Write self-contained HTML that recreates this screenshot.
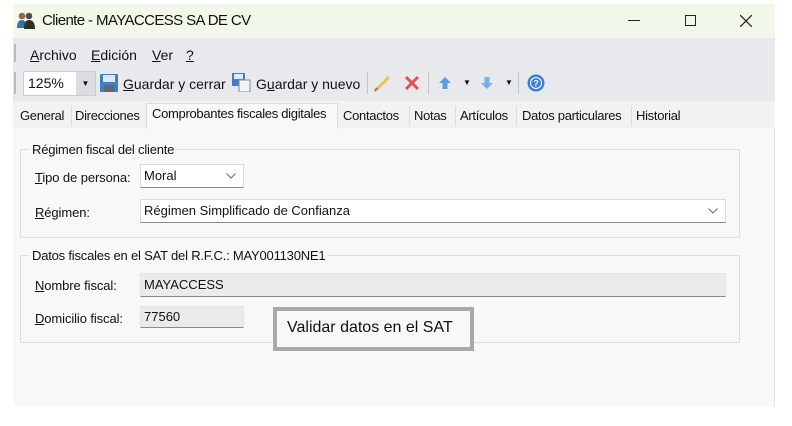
<!DOCTYPE html>
<html><head><meta charset="utf-8"><style>
*{margin:0;padding:0;box-sizing:border-box}
body{width:792px;height:426px;background:#fff;font-family:"Liberation Sans",Arial,sans-serif;position:relative;overflow:hidden;color:#111}
.a{position:absolute}
u{text-decoration:underline}
.win{left:13px;top:4px;width:762px;height:402px;background:#f8f8f8;border-right:1px solid #e4e4e4}
.title{left:13px;top:4px;width:762px;height:34px;background:#f1f8ea}
.menu{left:13px;top:38px;width:762px;height:63px;background:#e8e9ed}
.tabs{left:13px;top:101px;width:762px;height:27px;background:#f2f2f2}
.tab{position:absolute;top:108px;font-size:13px;letter-spacing:-0.3px}
.grp{position:absolute;border:1px solid #dcdcdc;border-radius:2px}
.leg{position:absolute;background:#f8f8f8;font-size:13px;padding:0 3px;letter-spacing:-0.2px}
.lbl{position:absolute;font-size:13px;letter-spacing:-0.1px}
.box{position:absolute;background:#fff;border:1px solid #d9d9d9;border-bottom-color:#8a8a8a;font-size:13px;padding:3px 0 0 3px}
.ro{background:#ebebeb;border-color:#e4e4e4;border-bottom-color:#8a8a8a}
.chev{position:absolute;right:7px;top:8px}
</style></head><body>
<div class="a win"></div>
<div class="a title"></div>
<div class="a menu"></div>
<div class="a tabs"></div>
<svg class="a" style="left:16px;top:11px" width="20" height="20" viewBox="0 0 20 20">
<circle cx="6" cy="5" r="3.3" fill="#8a6a55"/><circle cx="13" cy="5" r="3.3" fill="#5a4a44"/>
<path d="M1 17 Q1 9 6 9 Q10 9 10 14 L10 17Z" fill="#3a6fa8"/><path d="M8 18 Q8 9 13 9 Q19 9 19 18Z" fill="#2d2d2d"/>
</svg>
<div class="a" style="left:42px;top:12px;font-size:15px;letter-spacing:-0.6px">Cliente - MAYACCESS SA DE CV</div>
<div class="a" style="left:628px;top:20px;width:12px;height:1px;background:#222"></div>
<div class="a" style="left:685px;top:15px;width:11px;height:11px;border:1px solid #222"></div>
<svg class="a" style="left:740px;top:15px" width="12" height="12"><path d="M0 0L12 12M12 0L0 12" stroke="#222" stroke-width="1.2"/></svg>
<div class="a" style="left:14px;top:44px;width:2px;height:18px;background:#bbb"></div>
<div class="a" style="left:30px;top:47px;font-size:14px"><u>A</u>rchivo</div>
<div class="a" style="left:91px;top:47px;font-size:14px"><u>E</u>dición</div>
<div class="a" style="left:152px;top:47px;font-size:14px"><u>V</u>er</div>
<div class="a" style="left:186px;top:47px;font-size:14px"><u>?</u></div>
<div class="a" style="left:14px;top:72px;width:2px;height:22px;background:#bbb"></div>
<div class="a" style="left:23px;top:71px;width:73px;height:25px;background:#fff;border:1px solid #ccc;font-size:14px;padding:3px 0 0 4px">125%</div>
<div class="a" style="left:76px;top:72px;width:19px;height:23px;background:#dcdde2;font-size:8px;text-align:center;padding-top:7px">▼</div>
<svg class="a" style="left:100px;top:74px" width="18" height="18"><rect x="0" y="0" width="18" height="18" rx="1" fill="#3e7ec9"/><rect x="3" y="1" width="12" height="7" fill="#dbe8f6"/><rect x="4" y="11" width="10" height="7" fill="#666"/></svg>
<div class="a" style="left:123px;top:76px;font-size:14px"><u>G</u>uardar y cerrar</div>
<svg class="a" style="left:232px;top:73px" width="19" height="19"><rect x="0" y="0" width="13" height="13" fill="#3e7ec9"/><rect x="2" y="1" width="9" height="5" fill="#dbe8f6"/><rect x="7" y="7" width="11" height="12" fill="#f4f4f4" stroke="#888"/></svg>
<div class="a" style="left:256px;top:76px;font-size:14px">G<u>u</u>ardar y nuevo</div>
<div class="a" style="left:367px;top:72px;width:1px;height:22px;background:#c4c4c4"></div>
<svg class="a" style="left:374px;top:74px" width="18" height="18"><path d="M2 16L15 3" stroke="#e8c060" stroke-width="3"/><path d="M1 17L3 14" stroke="#c55" stroke-width="2"/></svg>
<svg class="a" style="left:404px;top:75px" width="16" height="16"><path d="M2 2L14 14M14 2L2 14" stroke="#e05050" stroke-width="3"/></svg>
<div class="a" style="left:428px;top:72px;width:1px;height:22px;background:#c4c4c4"></div>
<svg class="a" style="left:438px;top:76px" width="14" height="14"><path d="M7 1L13 7H9.5V13H4.5V7H1Z" fill="#5b9be0"/></svg>
<div class="a" style="left:463px;top:78px;font-size:8px">▼</div>
<svg class="a" style="left:480px;top:76px" width="14" height="14"><path d="M7 13L13 7H9.5V1H4.5V7H1Z" fill="#7aaee6"/></svg>
<div class="a" style="left:505px;top:78px;font-size:8px">▼</div>
<div class="a" style="left:518px;top:72px;width:1px;height:22px;background:#c4c4c4"></div>
<svg class="a" style="left:527px;top:74px" width="18" height="18"><circle cx="9" cy="9" r="8.5" fill="#3b7fd6"/><circle cx="9" cy="9" r="6" fill="#fff"/><circle cx="9" cy="9" r="5" fill="#3b7fd6"/><text x="9" y="12.5" font-size="9" font-weight="bold" fill="#fff" text-anchor="middle" font-family="Liberation Sans">?</text></svg>
<div class="tab" style="left:20px">General</div>
<div class="a" style="left:71px;top:106px;width:1px;height:20px;background:#ddd"></div>
<div class="tab" style="left:75px">Direcciones</div>
<div class="a" style="left:146px;top:103px;width:192px;height:26px;background:#f8f8f8;border:1px solid #dcdcdc;border-bottom:none"></div>
<div class="tab" style="left:152px;top:106px">Comprobantes fiscales digitales</div>
<div class="tab" style="left:343px">Contactos</div>
<div class="a" style="left:409px;top:106px;width:1px;height:20px;background:#ddd"></div>
<div class="tab" style="left:414px">Notas</div>
<div class="a" style="left:455px;top:106px;width:1px;height:20px;background:#ddd"></div>
<div class="tab" style="left:460px">Artículos</div>
<div class="a" style="left:516px;top:106px;width:1px;height:20px;background:#ddd"></div>
<div class="tab" style="left:522px">Datos particulares</div>
<div class="a" style="left:631px;top:106px;width:1px;height:20px;background:#ddd"></div>
<div class="tab" style="left:636px">Historial</div>
<div class="grp" style="left:20px;top:149px;width:720px;height:89px"></div>
<div class="leg" style="left:29px;top:142px">Régimen fiscal del cliente</div>
<div class="lbl" style="left:35px;top:170px"><u>T</u>ipo de persona:</div>
<div class="box" style="left:140px;top:164px;width:104px;height:24px">Moral<svg class="chev" width="10" height="6"><path d="M0.5 0.5L5 5L9.5 0.5" stroke="#666" fill="none"/></svg></div>
<div class="lbl" style="left:35px;top:205px"><u>R</u>égimen:</div>
<div class="box" style="left:140px;top:199px;width:586px;height:24px">Régimen Simplificado de Confianza<svg class="chev" width="10" height="6"><path d="M0.5 0.5L5 5L9.5 0.5" stroke="#666" fill="none"/></svg></div>
<div class="grp" style="left:20px;top:255px;width:720px;height:88px"></div>
<div class="leg" style="left:29px;top:248px">Datos fiscales en el SAT del R.F.C.: MAY001130NE1</div>
<div class="lbl" style="left:35px;top:278px"><u>N</u>ombre fiscal:</div>
<div class="box ro" style="left:140px;top:273px;width:586px;height:24px">MAYACCESS</div>
<div class="lbl" style="left:35px;top:311px"><u>D</u>omicilio fiscal:</div>
<div class="box ro" style="left:140px;top:306px;width:104px;height:22px;padding-top:2px">77560</div>
<div class="a" style="left:273px;top:307px;width:201px;height:44px;border:4px solid #a9a9a9;background:#f8f8f8;font-size:16px;padding:8px 0 0 10px">Validar datos en el SAT</div>
</body></html>
